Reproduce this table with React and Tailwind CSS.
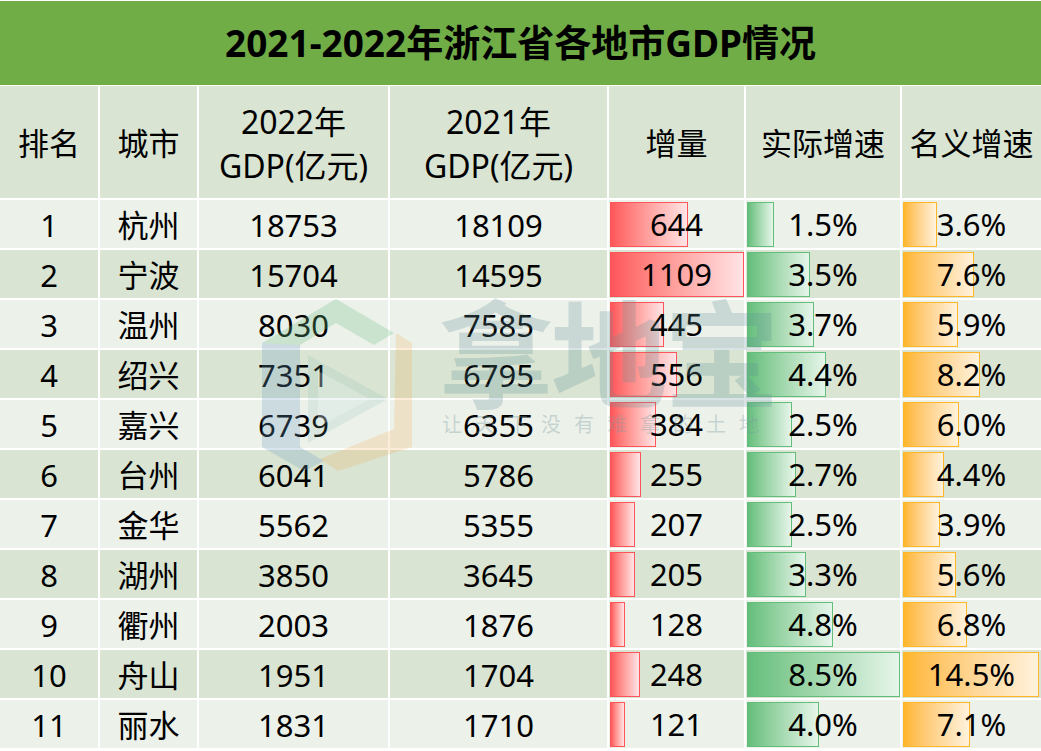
const rows = [
  [1, '杭州', 18753, 18109, 644, 1.5, 3.6],
  [2, '宁波', 15704, 14595, 1109, 3.5, 7.6],
  [3, '温州', 8030, 7585, 445, 3.7, 5.9],
  [4, '绍兴', 7351, 6795, 556, 4.4, 8.2],
  [5, '嘉兴', 6739, 6355, 384, 2.5, 6.0],
  [6, '台州', 6041, 5786, 255, 2.7, 4.4],
  [7, '金华', 5562, 5355, 207, 2.5, 3.9],
  [8, '湖州', 3850, 3645, 205, 3.3, 5.6],
  [9, '衢州', 2003, 1876, 128, 4.8, 6.8],
  [10, '舟山', 1951, 1704, 248, 8.5, 14.5],
  [11, '丽水', 1831, 1710, 121, 4.0, 7.1],
];

const BARS = {
  red: 'border-[#FF555A] bg-gradient-to-r from-[#FF555A] to-[#FFE4E6]',
  green: 'border-[#63BE7B] bg-gradient-to-r from-[#63BE7B] to-[#E6F5EA]',
  orange: 'border-[#FFB628] bg-gradient-to-r from-[#FFB628] to-[#FFF2DC]',
};

function BarCell({ bg, value, max, full, color, text }) {
  return (
    <div className={`relative flex items-center justify-center ${bg}`}>
      <div
        className={`absolute left-px top-[2px] bottom-px border ${BARS[color]}`}
        style={{ width: Math.round((value / max) * full) }}
      />
      <span className="relative">{text}</span>
    </div>
  );
}

// faint logo watermark laid over the table
function Watermark() {
  return (
    <div className="pointer-events-none absolute inset-0">
      <svg className="absolute left-[262px] top-[297px]" width="152" height="176" viewBox="0 0 152 176">
        <polygon points="0,46 74,2 132,36 112,48 74,26 38,48" fill="#6FBF86" fillOpacity="0.28" />
        <polygon points="0,46 38,48 38,150 62,164 42,174 0,150" fill="#6E9FC4" fillOpacity="0.26" />
        <polygon points="134,36 150,46 150,150 76,174 58,162 132,132" fill="#F0A850" fillOpacity="0.22" />
        <polygon points="46,58 126,102 46,146" fill="#7FB5B0" fillOpacity="0.16" />
        <polygon points="56,74 108,102 56,130" fill="#ffffff" fillOpacity="0.25" />
      </svg>
      <div className="absolute left-[438px] top-[296px] text-[116px] font-bold leading-none tracking-[-3px] text-[#5F8E98]/25">
        拿地宝
      </div>
      <div className="absolute left-[442px] top-[415px] text-[20px] leading-none tracking-[13px] text-[#7A9AA0]/35">
        让天下没有难拿的土地
      </div>
    </div>
  );
}

export default function App() {
  return (
    <div className="relative w-[1041px] h-[751px] overflow-hidden bg-white pt-px font-['Noto_Sans','Noto_Sans_CJK_SC',sans-serif] text-black">
      <div className="h-[84px] bg-[#70AD47] flex items-center justify-center text-[37px] font-bold">
        2021-2022年浙江省各地市GDP情况
      </div>
      <div className="mt-px grid grid-cols-[98px_97px_189px_217px_135px_154px_139px] gap-[2px] text-[31px]">
        <div className="h-[112px] bg-[#D9E4D2] flex items-center justify-center pt-[3px]">排名</div>
        <div className="h-[112px] bg-[#D9E4D2] flex items-center justify-center pt-[3px]">城市</div>
        <div className="h-[112px] bg-[#D9E4D2] flex flex-col items-center justify-center leading-[44px] pt-[4px] text-[32px]">
          <span>2022年</span>
          <span>GDP(亿元)</span>
        </div>
        <div className="h-[112px] bg-[#D9E4D2] flex flex-col items-center justify-center leading-[44px] pt-[4px] text-[32px]">
          <span>2021年</span>
          <span>GDP(亿元)</span>
        </div>
        <div className="h-[112px] bg-[#D9E4D2] flex items-center justify-center pt-[3px]">增量</div>
        <div className="h-[112px] bg-[#D9E4D2] flex items-center justify-center pt-[3px]">实际增速</div>
        <div className="h-[112px] bg-[#D9E4D2] flex items-center justify-center pt-[3px]">名义增速</div>
        {rows.map(([rank, city, g22, g21, inc, real, nom]) => {
          const bg = rank % 2 === 1 ? 'bg-[#ECF1EA]' : 'bg-[#D9E4D2]';
          return [
            <div key={`a${rank}`} className={`h-[48px] flex items-center justify-center pt-[2px] ${bg}`}>{rank}</div>,
            <div key={`b${rank}`} className={`h-[48px] flex items-center justify-center pt-[2px] ${bg}`}>{city}</div>,
            <div key={`c${rank}`} className={`h-[48px] flex items-center justify-center pt-[2px] ${bg}`}>{g22}</div>,
            <div key={`d${rank}`} className={`h-[48px] flex items-center justify-center pt-[2px] ${bg}`}>{g21}</div>,
            <BarCell key={`e${rank}`} bg={bg} value={inc} max={1109} full={134} color="red" text={inc} />,
            <BarCell key={`f${rank}`} bg={bg} value={real} max={8.5} full={153} color="green" text={`${real.toFixed(1)}%`} />,
            <BarCell key={`g${rank}`} bg={bg} value={nom} max={14.5} full={136} color="orange" text={`${nom.toFixed(1)}%`} />,
          ];
        })}
      </div>
      <Watermark />
    </div>
  );
}
